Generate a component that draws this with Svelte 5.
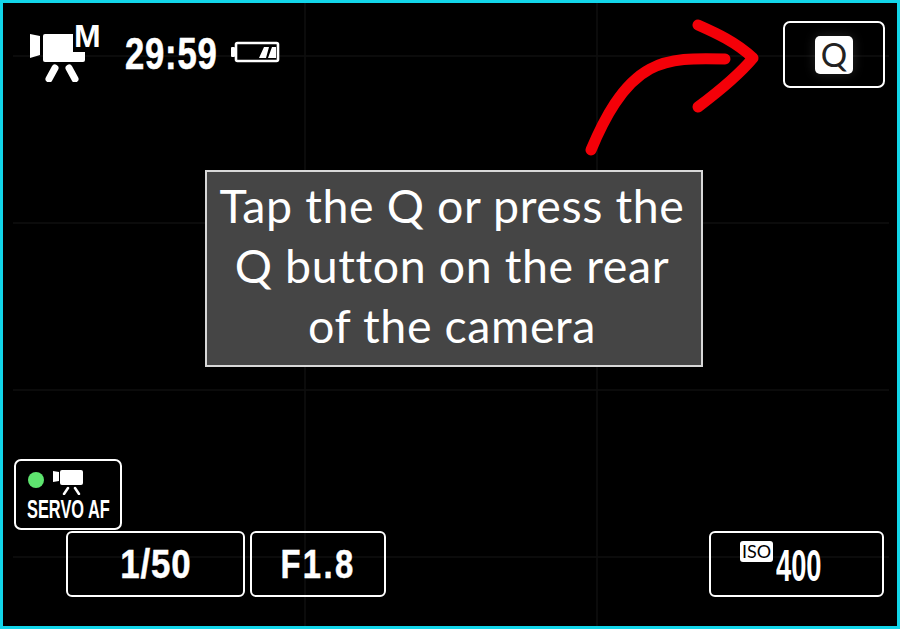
<script>
  const guideX = [305, 597];
  const guideY = [56, 223, 390, 557];
</script>

<div class="screen">
  <svg class="guides" width="894" height="623" viewBox="3 3 894 623" aria-hidden="true">
    {#each guideX as x}
      <line x1={x} y1="3" x2={x} y2="626" />
    {/each}
    {#each guideY as y}
      <line x1="13" y1={y} x2="889" y2={y} />
    {/each}
  </svg>

  <header class="top">
    <div class="movie-mode">
      <svg width="56" height="58" viewBox="0 0 56 58" aria-label="Movie camera">
        <path class="solid" d="M0 10 L10 12 V31 L0 34 Z" />
        <rect class="solid" x="13" y="10" width="42" height="28" rx="2" />
        <path class="leg" d="M25 44 L19 55 M39 44 L45 55" />
      </svg>
      <span class="mode">M</span>
    </div>
    <span class="time">29:59</span>
    <svg class="battery" width="49" height="22" viewBox="0 0 49 22" aria-label="Battery">
      <rect class="solid" x="0" y="6" width="4" height="10" rx="1" />
      <rect x="5" y="2" width="42" height="18" rx="1.5" fill="#000" stroke="#fff" stroke-width="2.6" />
      <path class="solid" d="M28 17 L33 6 H38 L35 17 Z M37 17 L41 6 H45 V17 Z" />
    </svg>
    <div class="q-button">
      <span class="q-key">Q</span>
    </div>
  </header>

  <p class="message">Tap the Q or press the<br />Q button on the rear<br />of the camera</p>

  <footer class="bottom">
    <div class="servo">
      <div class="servo-icons">
        <span class="dot"></span>
        <svg width="32" height="25" viewBox="0 0 32 25" aria-hidden="true">
          <path class="solid" d="M0 1 L6 2 V11 L0 12 Z" />
          <rect class="solid" x="7" y="0" width="23" height="15" rx="2" />
          <path class="leg thin" d="M15 18 L11 24 M22 18 L26 24" />
        </svg>
      </div>
      <span class="servo-label">SERVO AF</span>
    </div>
    <div class="controls">
      <div class="control shutter"><span class="value">1/50</span></div>
      <div class="control aperture"><span class="value wide">F1.8</span></div>
      <div class="control iso">
        <span class="iso-badge">ISO</span>
        <span class="iso-value">400</span>
      </div>
    </div>
  </footer>

  <svg class="arrow" width="190" height="150" viewBox="580 15 190 150" aria-hidden="true">
    <path d="M591 150 C604 119 622 84 650 69 C670 58 695 58 725 59" stroke-width="11" />
    <path d="M698 25 C716 33 736 42 753 58 C738 76 718 92 698 107" stroke-width="11" />
  </svg>
</div>

<style>
  :global(body) {
    margin: 0;
    background: #000;
  }

  .screen {
    position: relative;
    box-sizing: border-box;
    width: 900px;
    height: 629px;
    border: 3px solid #12d6ea;
    background: #000;
    display: flex;
    flex-direction: column;
    color: #fff;
    overflow: hidden;
  }

  .guides {
    position: absolute;
    inset: 0;
  }

  .guides line {
    stroke: #0f0f0f;
    stroke-width: 1.5;
  }

  .top,
  .message,
  .bottom {
    position: relative;
  }

  .top {
    display: flex;
    align-items: flex-start;
    height: 67px;
    margin-top: 18px;
    padding: 0 12px 0 27px;
  }

  .movie-mode {
    position: relative;
    flex: none;
    width: 72px;
    height: 58px;
    margin-top: 3px;
  }

  .solid {
    fill: #fff;
  }

  .leg {
    fill: none;
    stroke: #fff;
    stroke-width: 7;
    stroke-linecap: round;
  }

  .leg.thin {
    stroke-width: 2.5;
  }

  .mode {
    position: absolute;
    left: 43px;
    top: -4px;
    padding: 0 2px 0 1px;
    background: #000;
    font: 700 32px/32px "Liberation Sans", sans-serif;
  }

  .time {
    margin: 10px 0 0 23px;
    width: 93px;
    font: 700 45px/45px "Liberation Sans", sans-serif;
    letter-spacing: 1px;
    white-space: nowrap;
    transform: scaleX(0.77);
    transform-origin: left center;
    -webkit-text-stroke: 0.6px #fff;
  }

  .battery {
    margin: 20px 0 0 13px;
    flex: none;
  }

  .q-button {
    margin-left: auto;
    box-sizing: border-box;
    width: 102px;
    height: 67px;
    border: 2.5px solid #fff;
    border-radius: 7px;
    display: flex;
    align-items: center;
    justify-content: center;
  }

  .q-key {
    width: 38px;
    height: 38px;
    border-radius: 5px;
    background: #fff;
    color: #222;
    font: 400 33px/37px "Lato", sans-serif;
    text-align: center;
    box-shadow: 0 0 12px rgb(255 255 255 / 0.15);
  }

  .message {
    box-sizing: border-box;
    align-self: flex-start;
    width: 498px;
    height: 197px;
    margin: 82px 0 0 202px;
    padding: 3px 4px 0 0;
    border: 2px solid #d8d8d8;
    background: #454545;
    font: 400 46.5px/60px "Lato", sans-serif;
    letter-spacing: 0.6px;
    text-align: center;
  }

  .bottom {
    margin-top: auto;
    padding-bottom: 29px;
  }

  .servo {
    box-sizing: border-box;
    width: 108px;
    height: 71px;
    margin-left: 11px;
    padding: 8px 0 0 12px;
    border: 2px solid #fff;
    border-radius: 7px;
  }

  .servo-icons {
    display: flex;
    align-items: flex-start;
    gap: 9px;
    height: 24px;
    margin-top: 1px;
  }

  .dot {
    width: 16px;
    height: 16px;
    margin-top: 2px;
    border-radius: 50%;
    background: #5ee56f;
  }

  .servo-label {
    display: block;
    margin: 2px 0 0 -1px;
    font: 700 26px/26px "Liberation Sans", sans-serif;
    white-space: nowrap;
    transform: scaleX(0.63);
    transform-origin: left center;
  }

  .controls {
    display: flex;
    gap: 5px;
    margin: 1px 13px 0 63px;
  }

  .control {
    box-sizing: border-box;
    height: 66px;
    border: 2px solid #fff;
    border-radius: 6px;
    display: flex;
    align-items: center;
    justify-content: center;
  }

  .shutter {
    width: 179px;
  }

  .aperture {
    width: 136px;
  }

  .iso {
    width: 175px;
    margin-left: auto;
    justify-content: flex-start;
    align-items: flex-start;
    padding: 8px 0 0 29px;
  }

  .value {
    font: 700 41px/41px "Liberation Sans", sans-serif;
    letter-spacing: 1px;
    transform: scaleX(0.85);
    -webkit-text-stroke: 0.5px #fff;
  }

  .value.wide {
    letter-spacing: 3px;
    transform: scaleX(0.8);
  }

  .iso-badge {
    width: 33px;
    height: 21px;
    border-radius: 3px;
    background: #fff;
    color: #000;
    font: 400 18px/21px "Lato", sans-serif;
    text-align: center;
  }

  .iso-value {
    margin: 3px 0 0 3px;
    font: 700 44px/44px "Liberation Sans", sans-serif;
    transform: scaleX(0.62);
    transform-origin: left center;
  }

  .arrow {
    position: absolute;
    left: 577px;
    top: 12px;
  }

  .arrow path {
    fill: none;
    stroke: #f40008;
    stroke-linecap: round;
    stroke-linejoin: round;
  }
</style>
